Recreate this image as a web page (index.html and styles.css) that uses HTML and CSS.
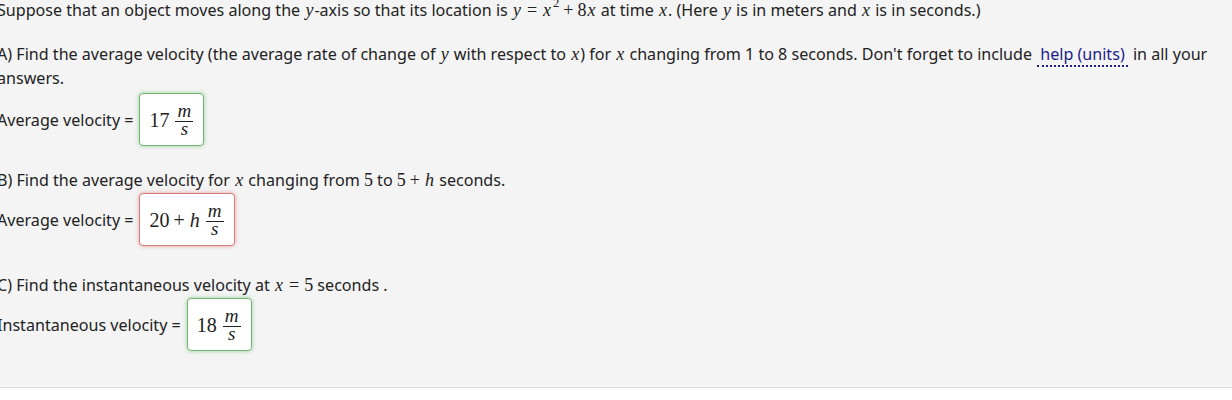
FILE: index.html
```html
<!DOCTYPE html>
<html>
<head>
<meta charset="utf-8">
<link rel="stylesheet" href="styles.css">
</head>
<body>
<div class="problem">
  <div class="content">
    <p class="intro">Suppose that an object moves along the <span class="m"><i>y</i></span>-axis so that its location is <span class="m"><i>y</i><span class="rel">=</span><i>x</i><sup>2</sup><span class="bin">+</span>8<i>x</i></span> at time <span class="m"><i>x</i></span>. (Here <span class="m"><i>y</i></span> is in meters and <span class="m"><i>x</i></span> is in seconds.)</p>

    <p class="q qa">A) Find the average velocity (the average rate of change of <span class="m"><i>y</i></span> with respect to <span class="m"><i>x</i></span>) for <span class="m"><i>x</i></span> changing from 1 to 8 seconds. Don't forget to include <a class="help" href="#">help (units)</a> in all your answers.</p>
    <div class="row ra">
      <span class="label">Average velocity =</span>
      <span class="ans correct"><span class="val">17</span><span class="frac"><i class="num">m</i><i class="den">s</i></span></span>
    </div>

    <p class="q qb">B) Find the average velocity for <span class="m"><i>x</i></span> changing from <span class="m">5</span> to <span class="m">5<span class="bin">+</span><i>h</i></span> seconds.</p>
    <div class="row">
      <span class="label">Average velocity =</span>
      <span class="ans wrong"><span class="val">20<span class="op">+</span><i>h</i></span><span class="frac"><i class="num">m</i><i class="den">s</i></span></span>
    </div>

    <p class="q qc">C) Find the instantaneous velocity at <span class="m"><i>x</i><span class="rel">=</span>5</span> seconds .</p>
    <div class="row">
      <span class="label">Instantaneous velocity =</span>
      <span class="ans correct"><span class="val">18</span><span class="frac"><i class="num">m</i><i class="den">s</i></span></span>
    </div>
  </div>
</div>
</body>
</html>
```

FILE: styles.css
```css
html, body {
  margin: 0;
  padding: 0;
  background: #ffffff;
}
.problem {
  background: #f4f4f4;
  border-bottom: 1px solid #dedede;
  height: 387px;
  overflow: hidden;
}
.content {
  margin-left: -3px;
  width: 1236px;
  font-family: "Noto Sans", "Open Sans", sans-serif;
  font-size: 16.1px;
  line-height: 24px;
  color: #222;
}
p {
  margin: 0;
}
.intro {
  margin-top: -2px;
}
.qa {
  margin-top: 20px;
}
.qb {
  margin-top: 22px;
}
.qc {
  margin-top: 27px;
}
.m {
  font-family: "Liberation Serif", "DejaVu Serif", serif;
  font-size: 18px;
}
.m i, .ans i {
  font-style: italic;
}
.m i {
  padding: 0 1px;
}
.rel {
  margin: 0 5px;
}
.bin {
  margin: 0 4px;
}
.m sup {
  font-size: 12.5px;
  line-height: 0;
  position: relative;
  top: -2px;
  margin-left: 1px;
}
.help {
  color: #1c1c8a;
  text-decoration: none;
  border-bottom: 2px dotted #1c1c8a;
  padding: 0 3px;
  margin: 0 1px;
}
.row {
  display: flex;
  align-items: center;
  height: 53px;
  margin-top: 1px;
}
.ra {
  margin-top: 3px;
}
.label {
  margin-right: 6px;
}
.ans {
  display: inline-flex;
  align-items: center;
  box-sizing: border-box;
  height: 53px;
  padding: 0 10px 0 9px;
  background: #ffffff;
  border: 1px solid #72b472;
  border-radius: 4px;
  font-family: "Liberation Serif", "DejaVu Serif", serif;
  font-size: 20px;
  color: #222;
}
.ans.correct {
  box-shadow: 0 0 4px rgba(92, 184, 92, 0.6);
}
.ans.wrong {
  border-color: #d77a7a;
  box-shadow: 0 0 4px rgba(217, 83, 79, 0.5);
}
.val {
  line-height: 20px;
  margin-right: 6px;
  padding-top: 1px;
}
.op {
  margin: 0 5px 0 4px;
}
.frac {
  display: inline-flex;
  flex-direction: column;
  align-items: center;
  font-size: 19px;
}
.frac .num {
  line-height: 12px;
  padding: 0 2px 4px;
  border-bottom: 1px solid #222;
}
.frac .den {
  line-height: 12px;
  padding-top: 1px;
}
```
